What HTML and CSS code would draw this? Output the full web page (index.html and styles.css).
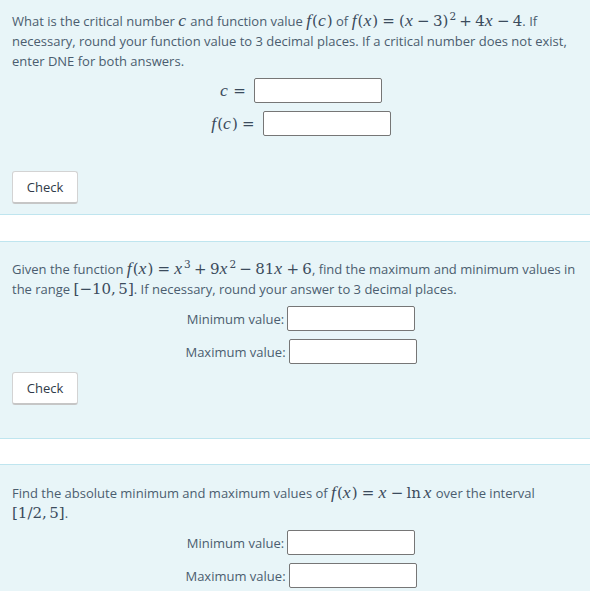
FILE: index.html
```html
<!DOCTYPE html>
<html>
<head>
<meta charset="utf-8">
<link rel="stylesheet" href="styles.css">
</head>
<body>
<div class="panel p1">
  <p class="q">What is the critical number <span class="m"><i>c</i></span> and function value <span class="m"><i>f</i>(<i>c</i>)</span> of <span class="m"><i>f</i>(<i>x</i>)<span class="rel">=</span>(<i>x</i><span class="bin">−</span>3)<span class="sup">2</span><span class="bin">+</span>4<i>x</i><span class="bin">−</span>4</span>. If necessary, round your function value to 3 decimal places. If a critical number does not exist, enter DNE for both answers.</p>
  <div class="fields">
    <div class="row"><span class="m lab"><i>c</i><span class="rel">=</span></span><input class="box" type="text"></div>
    <div class="row"><span class="m lab"><i>f</i>(<i>c</i>)<span class="rel">=</span></span><input class="box" type="text"></div>
  </div>
  <button class="check">Check</button>
</div>
<div class="gap gap1"></div>
<div class="panel p2">
  <p class="q">Given the function <span class="m"><i>f</i>(<i>x</i>)<span class="rel">=</span><i>x</i><span class="sup">3</span><span class="bin">+</span>9<i>x</i><span class="sup">2</span><span class="bin">−</span>81<i>x</i><span class="bin">+</span>6</span>, find the maximum and minimum values in the range <span class="m">[−10,<span class="thin"></span>5]</span>. If necessary, round your answer to 3 decimal places.</p>
  <div class="fields">
    <div class="row"><span class="lab">Minimum value:</span><input class="box" type="text"></div>
    <div class="row"><span class="lab">Maximum value:</span><input class="box" type="text"></div>
  </div>
  <button class="check">Check</button>
</div>
<div class="gap gap2"></div>
<div class="panel p3">
  <p class="q">Find the absolute minimum and maximum values of <span class="m"><i>f</i>(<i>x</i>)<span class="rel">=</span><i>x</i><span class="bin">−</span>ln<span class="thin"></span><i>x</i></span> over the interval <span class="m">[1/2,<span class="thin"></span>5]</span>.</p>
  <div class="fields">
    <div class="row"><span class="lab">Minimum value:</span><input class="box" type="text"></div>
    <div class="row"><span class="lab">Maximum value:</span><input class="box" type="text"></div>
  </div>
</div>
</body>
</html>
```
FILE: styles.css
```css
html, body {
  margin: 0;
  padding: 0;
  background: #ffffff;
}
body {
  font-family: "Open Sans", "Noto Sans", sans-serif;
  font-size: 13px;
  color: #4b5d6f;
}
.panel {
  background: #e8f5f8;
  padding-left: 12px;
  padding-right: 0;
}
.p1 {
  padding-top: 11px;
  padding-bottom: 10px;
  border-bottom: 1px solid #bfe5ef;
}
.p2 {
  padding-top: 17px;
  padding-bottom: 33px;
  border-top: 1px solid #bfe5ef;
  border-bottom: 1px solid #bfe5ef;
}
.p3 {
  padding-top: 18px;
  padding-bottom: 10px;
  border-top: 1px solid #bfe5ef;
}
.gap {
  background: #ffffff;
}
.gap1 {
  height: 26px;
}
.gap2 {
  height: 25px;
}
.q {
  margin: 0;
  line-height: 20px;
}
.m {
  font-family: "DejaVu Serif", "Liberation Serif", serif;
  font-size: 15px;
  line-height: 1;
  color: #3b4b5c;
  white-space: nowrap;
}
.m i {
  font-family: "Liberation Serif", "DejaVu Serif", serif;
  font-style: italic;
  font-size: 1.18em;
  padding-right: 1px;
}
.rel {
  margin: 0 0.28em;
}
.bin {
  margin: 0 0.22em;
}
.thin {
  display: inline-block;
  width: 0.17em;
}
.sup {
  font-size: 0.7em;
  vertical-align: 0.55em;
  line-height: 0;
  margin-left: 1px;
}
.fields {
  margin-top: 7px;
  display: flex;
  flex-direction: column;
  gap: 8px;
}
.row {
  display: flex;
  justify-content: center;
  align-items: center;
  height: 25px;
}
.lab {
  margin-right: 3px;
}
.m.lab {
  margin-right: 4px;
}
.box {
  box-sizing: border-box;
  width: 128px;
  height: 25px;
  margin: 0;
  border: 1px solid #767676;
  border-radius: 2px;
  background: #ffffff;
  padding: 0 4px;
  font: inherit;
}
.check {
  display: block;
  box-sizing: border-box;
  width: 66px;
  height: 33px;
  padding: 0;
  background: #ffffff;
  border: 1px solid #d3d3d3;
  border-bottom: 2px solid #c6c6c6;
  border-radius: 3px;
  font-family: "Open Sans", "Noto Sans", sans-serif;
  font-size: 13px;
  color: #2f3a48;
}
.p1 .check {
  margin-top: 35px;
}
.p2 .check {
  margin-top: 8px;
}
```
